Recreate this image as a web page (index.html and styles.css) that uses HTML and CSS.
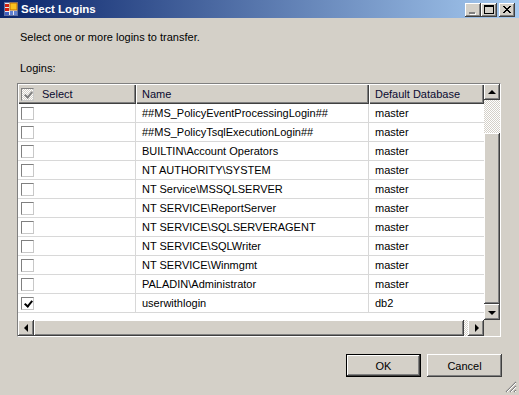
FILE: index.html
```html
<!DOCTYPE html>
<html lang="en">
<head>
  <meta charset="UTF-8">
  <title>Select Logins</title>
  <link rel="stylesheet" href="styles.css">
</head>
<body>

  <div class="window">
    <div class="titlebar">
      <svg class="app-icon" width="14" height="14" viewBox="0 0 14 14">
        <rect x="0.5" y="0.5" width="13" height="13" fill="#e8e8f0" stroke="#6070a0"/>
        <rect x="1" y="2" width="4" height="3" fill="#d02010"/>
        <rect x="1" y="6" width="4" height="3" fill="#d02010"/>
        <rect x="1" y="10" width="4" height="3" fill="#4060c0"/>
        <rect x="6" y="1" width="7" height="7" fill="#f8c020" stroke="#c07000" stroke-width="1"/>
        <rect x="6" y="9" width="3" height="4" fill="#6080d0"/>
        <rect x="10" y="9" width="3" height="4" fill="#6080d0"/>
      </svg>
      <span class="title">Select Logins</span>
      <div class="caption-buttons">
        <span class="cap-btn">
          <svg width="16" height="14" viewBox="0 0 16 14">
            <rect x="5" y="10" width="6" height="2" fill="#fff" opacity="0.9"/>
            <rect x="4" y="9" width="6" height="2" fill="#808080"/>
          </svg>
        </span>
        <span class="cap-btn">
          <svg width="16" height="14" viewBox="0 0 16 14">
            <rect x="3.5" y="2.5" width="9" height="8" fill="none" stroke="#000"/>
            <rect x="3" y="2" width="10" height="2" fill="#000"/>
          </svg>
        </span>
        <span class="cap-btn close">
          <svg width="16" height="14" viewBox="0 0 16 14">
            <path d="M4 3 L11 10 M5 3 L12 10 M11 3 L4 10 M12 3 L5 10" stroke="#000" stroke-width="1"/>
          </svg>
        </span>
      </div>
    </div>

    <div class="content">
      <p class="prompt">Select one or more logins to transfer.</p>
      <p class="prompt label">Logins:</p>

      <div class="grid">
        <div class="grid-main">
          <div class="grid-view">
            <div class="row header">
              <div class="hcell"><span class="check disabled"></span>Select</div>
              <div class="hcell">Name</div>
              <div class="hcell">Default Database</div>
            </div>
            <div class="row"><div class="cell"><span class="check"></span></div><div class="cell">##MS_PolicyEventProcessingLogin##</div><div class="cell">master</div></div>
            <div class="row"><div class="cell"><span class="check"></span></div><div class="cell">##MS_PolicyTsqlExecutionLogin##</div><div class="cell">master</div></div>
            <div class="row"><div class="cell"><span class="check"></span></div><div class="cell">BUILTIN\Account Operators</div><div class="cell">master</div></div>
            <div class="row"><div class="cell"><span class="check"></span></div><div class="cell">NT AUTHORITY\SYSTEM</div><div class="cell">master</div></div>
            <div class="row"><div class="cell"><span class="check"></span></div><div class="cell">NT Service\MSSQLSERVER</div><div class="cell">master</div></div>
            <div class="row"><div class="cell"><span class="check"></span></div><div class="cell">NT SERVICE\ReportServer</div><div class="cell">master</div></div>
            <div class="row"><div class="cell"><span class="check"></span></div><div class="cell">NT SERVICE\SQLSERVERAGENT</div><div class="cell">master</div></div>
            <div class="row"><div class="cell"><span class="check"></span></div><div class="cell">NT SERVICE\SQLWriter</div><div class="cell">master</div></div>
            <div class="row"><div class="cell"><span class="check"></span></div><div class="cell">NT SERVICE\Winmgmt</div><div class="cell">master</div></div>
            <div class="row"><div class="cell"><span class="check"></span></div><div class="cell">PALADIN\Administrator</div><div class="cell">master</div></div>
            <div class="row"><div class="cell"><span class="check checked"></span></div><div class="cell">userwithlogin</div><div class="cell">db2</div></div>
          </div>
          <div class="vscroll">
            <div class="sb-btn"><span class="arrow up"></span></div>
            <div class="track">
              <div class="checker v-top"></div>
              <div class="thumb v-thumb"></div>
            </div>
            <div class="sb-btn"><span class="arrow down"></span></div>
          </div>
        </div>
        <div class="hscroll">
          <div class="sb-btn"><span class="arrow left"></span></div>
          <div class="track horiz">
            <div class="thumb h-thumb"></div>
            <div class="checker h-end"></div>
          </div>
          <div class="sb-btn"><span class="arrow right"></span></div>
          <div class="corner"></div>
        </div>
      </div>

      <div class="actions">
        <button class="btn default">OK</button>
        <button class="btn">Cancel</button>
      </div>
    </div>

    <svg class="grip" width="12" height="12" viewBox="0 0 12 12">
      <path d="M11 1 L1 11 M11 5 L5 11 M11 9 L9 11" stroke="#808080" stroke-width="1.2"/>
      <path d="M11 2 L2 11 M11 6 L6 11 M11 10 L10 11" stroke="#fff" stroke-width="1"/>
    </svg>
  </div>

</body>
</html>
```

FILE: styles.css
```css
* {
  box-sizing: border-box;
}
body {
  margin: 0;
  padding: 0;
  background: #d4d0c8;
  font-family: 'Liberation Sans', Arial, sans-serif;
  font-size: 11px;
  color: #000;
}
.window {
  position: relative;
  width: 519px;
  height: 395px;
  overflow: hidden;
}
.titlebar {
  height: 18px;
  display: flex;
  align-items: center;
  padding-left: 4px;
  background: linear-gradient(to right, #0a246a, #a6caf0);
}
.app-icon {
  flex: none;
}
.title {
  margin-left: 3px;
  color: #fff;
  font-weight: bold;
  font-size: 11.5px;
}
.caption-buttons {
  margin-left: auto;
  display: flex;
  padding-right: 4px;
  padding-top: 1px;
}
.cap-btn {
  width: 16px;
  height: 14px;
  background: #d4d0c8;
  box-shadow: inset -1px -1px #404040, inset 1px 1px #fff, inset -2px -2px #808080;
  display: block;
}
.cap-btn svg {
  display: block;
}
.cap-btn.close {
  margin-left: 2px;
}
.content {
  padding: 0 18px 0 17px;
}
.prompt {
  margin: 13px 0 0 3px;
  line-height: 13px;
}
.label {
  margin-top: 18px;
}
.grid {
  margin-top: 8px;
  width: 484px;
  height: 254px;
  border: 1px solid;
  border-color: #808080 #fff #fff #808080;
  display: flex;
  flex-direction: column;
}
.grid-main {
  display: flex;
  height: 236px;
}
.grid-view {
  width: 466px;
  background: #fff;
}
.row {
  display: grid;
  grid-template-columns: 118px 233px 115px;
  height: 19px;
}
.cell {
  border-right: 1px solid #d8d8d8;
  border-bottom: 1px solid #d8d8d8;
  line-height: 18px;
  padding-left: 6px;
  white-space: nowrap;
  overflow: hidden;
}
.cell:first-child {
  padding-left: 3px;
  display: flex;
  align-items: center;
}
.cell:last-child {
  border-right: none;
}
.row.header {
  height: 20px;
}
.header .hcell {
  background: #d4d0c8;
  box-shadow: inset 1px 1px #fff, inset -1px -1px #404040, inset -2px -2px #808080;
  line-height: 20px;
  padding-left: 6px;
  display: flex;
  align-items: center;
  color: #0a0a30;
}
.header .hcell:first-child {
  padding-left: 3px;
}
.check {
  display: inline-block;
  width: 13px;
  height: 13px;
  border: 1px solid;
  border-color: #808080 #c8c8c8 #c8c8c8 #808080;
  background: #fff;
  position: relative;
  flex: none;
}
.check.disabled {
  background: repeating-conic-gradient(#fff 0 25%, #d4d0c8 0 50%) 0 0/2px 2px;
  margin-right: 8px;
}
.check.checked::after,
.check.disabled::after {
  content: "";
  position: absolute;
  left: 4px;
  top: 1px;
  width: 3px;
  height: 6px;
  border: solid #000;
  border-width: 0 2px 2px 0;
  transform: rotate(40deg);
}
.check.disabled::after {
  border-color: #808080;
}
.vscroll {
  width: 16px;
  display: flex;
  flex-direction: column;
}
.sb-btn {
  width: 16px;
  height: 16px;
  flex: none;
  background: #d4d0c8;
  box-shadow: inset -1px -1px #404040, inset 1px 1px #fff, inset -2px -2px #808080;
  display: flex;
  align-items: center;
  justify-content: center;
}
.track {
  flex: 1;
  display: flex;
  flex-direction: column;
}
.track.horiz {
  flex-direction: row;
}
.checker {
  background: repeating-conic-gradient(#fff 0 25%, #d4d0c8 0 50%) 0 0/2px 2px;
}
.v-top {
  height: 33px;
}
.h-end {
  width: 4px;
}
.thumb {
  flex: 1;
  background: #d4d0c8;
  box-shadow: inset -1px -1px #404040, inset 1px 1px #fff, inset -2px -2px #808080;
}
.hscroll {
  display: flex;
  height: 16px;
}
.corner {
  width: 16px;
  background: #d4d0c8;
}
.arrow {
  width: 0;
  height: 0;
  border: 4px solid transparent;
}
.arrow.up {
  border-bottom-color: #000;
  border-top-width: 0;
  margin-top: -1px;
}
.arrow.down {
  border-top-color: #000;
  border-bottom-width: 0;
  margin-top: 1px;
}
.arrow.left {
  border-right-color: #000;
  border-left-width: 0;
  margin-left: -1px;
}
.arrow.right {
  border-left-color: #000;
  border-right-width: 0;
  margin-left: 1px;
}
.actions {
  display: flex;
  justify-content: flex-end;
  gap: 6px;
  margin-top: 17px;
  width: 485px;
}
.btn {
  width: 75px;
  height: 23px;
  font-family: 'Liberation Sans', Arial, sans-serif;
  font-size: 11px;
  color: #000;
  background: #d4d0c8;
  border: none;
  padding: 0;
  box-shadow: inset -1px -1px #404040, inset 1px 1px #fff, inset -2px -2px #808080;
}
.btn.default {
  border: 1px solid #000;
}
.grip {
  position: absolute;
  right: 2px;
  bottom: 2px;
}
```
